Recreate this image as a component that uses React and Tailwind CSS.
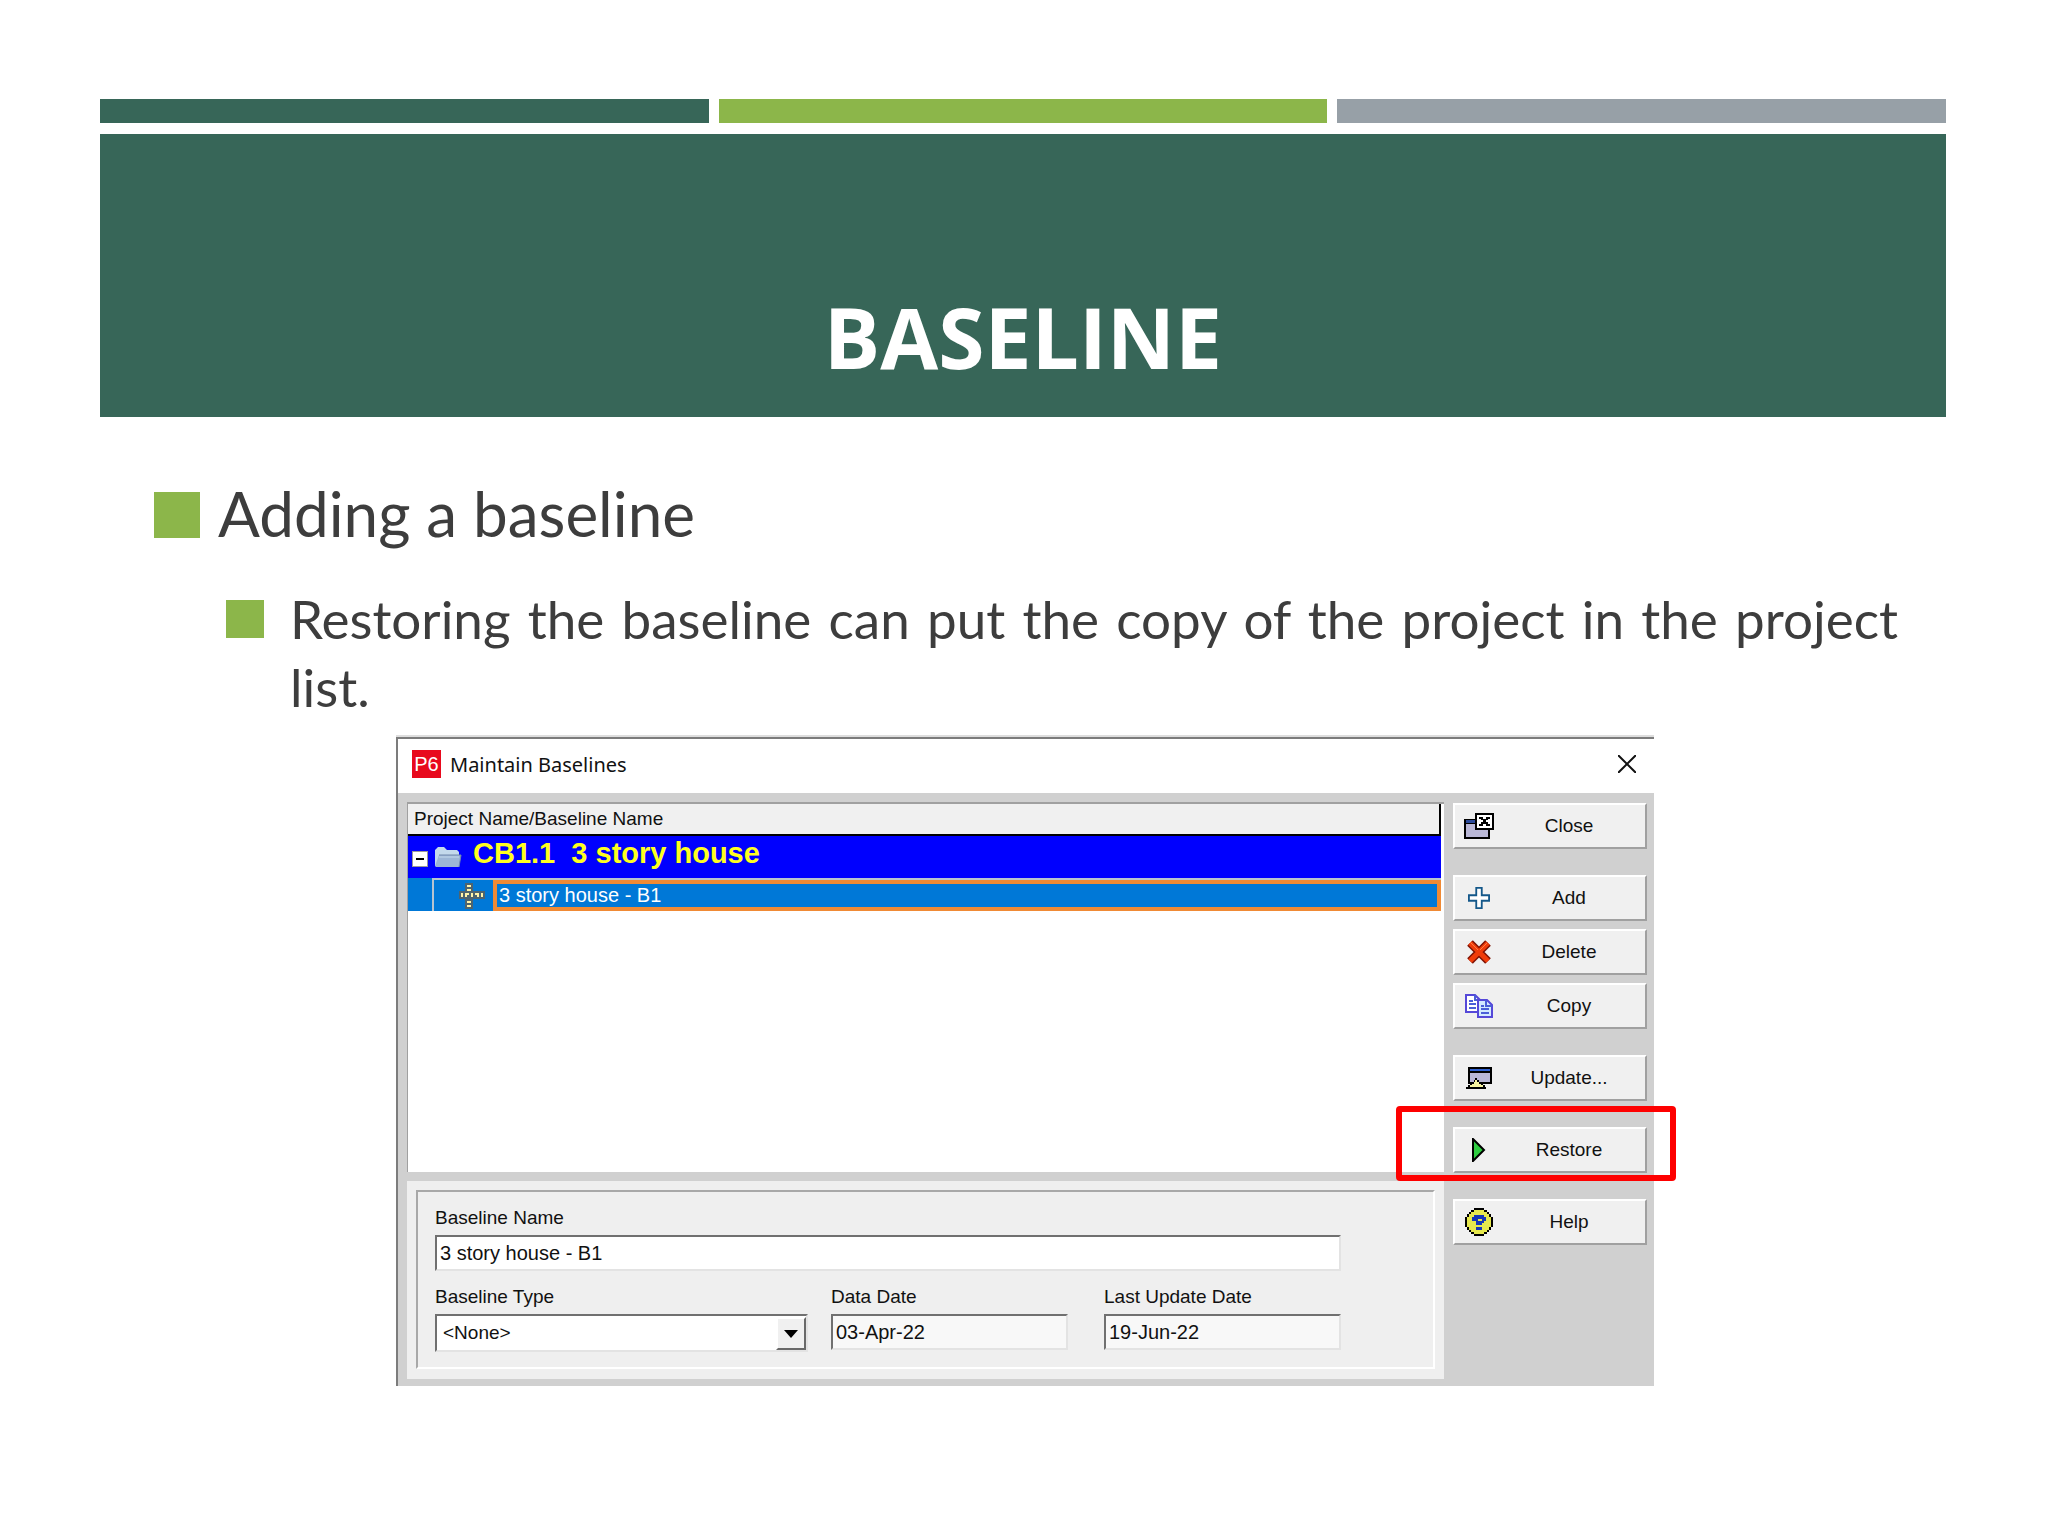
import React from "react";

const CloseIcon = () => (
  <svg viewBox="0 0 16 14" className="h-[26px] w-[30px]" shapeRendering="crispEdges">
    <path fill="#000" d="M0 3h14v11H0z" />
    <path fill="#b9b7d6" d="M1 6h12v7H1z" />
    <path fill="#2b4a9b" d="M1 4h6v1.500H1z" />
    <path fill="#000" d="M6 0h10v9H6z" />
    <path fill="#fff" d="M7 1h8v7H7z" />
    <path fill="#000" d="M8 2h2v1h2V2h2v1h-1v1h-1v1h1v1h1v1h-2V6h-2v1H8V6h1V5h1V4H9V3H8z" />
  </svg>
);

const AddIcon = () => (
  <svg viewBox="0 0 12 12" className="h-[22px] w-[22px]">
    <path d="M4.500 .5h3v4h4v3h-4v4h-3v-4h-4v-3h4z" fill="#fff" stroke="#14588a" />
  </svg>
);

const DeleteIcon = () => (
  <svg viewBox="0 0 24 24" className="h-6 w-6">
    <path d="M3 3l18 18M21 3L3 21" fill="none" stroke="#7d1205" strokeWidth="8" />
    <path d="M3 3l18 18M21 3L3 21" fill="none" stroke="#f03c0a" strokeWidth="5" />
    <path d="M3 2l8 8M20 3l-7 7" fill="none" stroke="#ff7a45" strokeWidth="1" />
  </svg>
);

const CopyIcon = () => (
  <svg viewBox="0 0 28 24" className="h-6 w-7">
    <path d="M1 1h9l5 5v12H1z" fill="#fff" stroke="#5548d8" strokeWidth="2" />
    <path d="M10 1v5h5M4 7h4M4 10h7M4 14h7" fill="none" stroke="#4a5fd8" strokeWidth="2" />
    <path d="M13 6h9l5 5v12H13z" fill="#d3eaff" stroke="#5548d8" strokeWidth="2" />
    <path d="M21 6v6h6M16 12h3M16 15h8M16 19h8" fill="none" stroke="#4a5fd8" strokeWidth="2" />
  </svg>
);

const UpdateIcon = () => (
  <svg viewBox="0 0 14 12" className="h-[22px] w-[26px]" shapeRendering="crispEdges">
    <path fill="#000" d="M1 0h13v9H1z" />
    <path fill="#2f5fd0" d="M2 1h11v1H2z" />
    <path fill="#b9b7d6" d="M2 3h11v5H2z" />
    <path fill="#000" d="M0 11h11v1H0zM1 10h9v1H1zM2 9h7v1H2zM3 8h5v1H3zM4 7h3v1H4zM5 6h1v1H5z" />
    <path fill="#f6f3a0" d="M5 7h1v1h1v1h1v1h1v1H2v-1h1V9h1V8h1z" />
  </svg>
);

const RestoreIcon = () => (
  <svg viewBox="0 0 14 24" className="h-6 w-[14px]">
    <path d="M1 1l11 11L1 23z" fill="#2ecc40" stroke="#000" strokeWidth="2" />
  </svg>
);

const HelpIcon = () => (
  <svg viewBox="0 0 15 15" className="h-7 w-7" shapeRendering="crispEdges">
    <path
      fill="#000"
      d="M5 0h5v1h2v1h1v1h1v2h1v5h-1v2h-1v1h-1v1h-2v1H5v-1H3v-1H2v-1H1v-2H0V5h1V3h1V2h1V1h2z"
    />
    <path
      fill="#e6e84e"
      d="M5 1h5v1h2v1h1v2h1v5h-1v2h-1v1h-2v1H5v-1H3v-1H2v-2H1V5h1V3h1V2h2z"
    />
    <path fill="#1436b8" d="M5 4h5v1h1v2h-1v1H9v1H6V7h3V6H7v1H4V5h1zM6 10h3v2H6z" />
  </svg>
);

const FolderIcon = () => (
  <svg viewBox="0 0 28 22" className="h-[22px] w-7">
    <path d="M1 20V4l3-3h6l3 3h10l2 2v14z" fill="#c3d9ec" />
    <path d="M1 20l4-11h22l-2 12H2z" fill="#9db6d6" />
    <path d="M5 9h22l-2 12" fill="none" stroke="#7088ac" />
    <path d="M5 11h20" stroke="#c3d9ec" />
  </svg>
);

const BaselineIcon = () => (
  <svg viewBox="0 0 13 13" className="h-[26px] w-[26px]" shapeRendering="crispEdges">
    <path
      d="M3 0h4v4h6v4H7v5H3V8H0V4h3z"
      fill="#4d6470"
    />
    <path
      d="M4 1h2v1H4zM4 3h2v1H4zM4 9h2v1H4zM4 11h2v1H4zM1 5h1v2H1zM3 5h2v1H4v1H3zM6 5h1v2H6zM8 5h2v2H9V6H8zM11 5h1v2h-1z"
      fill="#fff3a8"
    />
  </svg>
);

const sections = [
  [{ label: "Close", icon: <CloseIcon /> }],
  [
    { label: "Add", icon: <AddIcon /> },
    { label: "Delete", icon: <DeleteIcon /> },
    { label: "Copy", icon: <CopyIcon /> },
  ],
  [{ label: "Update...", icon: <UpdateIcon /> }],
  [{ label: "Restore", icon: <RestoreIcon />, highlight: true }],
  [{ label: "Help", icon: <HelpIcon /> }],
];

function SideButton({ label, icon, highlight }) {
  return (
    <div className="relative">
      <button
        type="button"
        className="flex h-[46px] w-full items-center border-2 border-t-white border-l-white border-r-[#a0a0a0] border-b-[#a0a0a0] bg-[#f0f0f0] pr-3 pl-1.5"
      >
        <span className="flex w-9 justify-center">{icon}</span>
        <span className="flex-1 pl-2 text-center">{label}</span>
      </button>
      {highlight && (
        <div className="pointer-events-none absolute -top-[21px] -right-[29px] -bottom-2 -left-[57px] z-10 rounded border-[6px] border-[#fe0000]" />
      )}
    </div>
  );
}

const sunken =
  "w-full border-2 border-t-[#707070] border-l-[#707070] border-r-[#e3e3e3] border-b-[#e3e3e3] outline-none";

function Field({ id, label, value, className, readOnly }) {
  return (
    <div className={className}>
      <label htmlFor={id} className="block leading-6">
        {label}
      </label>
      <input
        id={id}
        type="text"
        defaultValue={value}
        readOnly={readOnly}
        className={`${sunken} mt-[5px] block h-9 px-[3px] text-[20px] ${readOnly ? "bg-[#f8f8f8]" : "bg-white"}`}
      />
    </div>
  );
}

function Dialog() {
  return (
    <section className="mt-[14px] mr-[292px] ml-[296px] border-t-2 border-[#dedede] font-['Liberation_Sans',Arial,sans-serif] text-[19px] text-[#111]">
      <div className="border-t-2 border-l-2 border-[#7c7c7c]">
        {/* Title bar */}
        <header className="flex h-[54px] items-center bg-white pr-[18px] pb-1 pl-[14px]">
          <span className="flex h-7 w-[29px] items-center justify-center bg-[#e8091d] text-[20px] text-white">
            P6
          </span>
          <h2 className="ml-[9px] pt-[2px] font-['Noto_Sans','Open_Sans',sans-serif] text-[20px]">
            Maintain Baselines
          </h2>
          <button type="button" aria-label="Close window" className="ml-auto">
            <svg viewBox="0 0 18 18" className="h-[18px] w-[18px]">
              <path d="M0 0l18 18M18 0L0 18" stroke="#111" strokeWidth="2" />
            </svg>
          </button>
        </header>

        <div className="flex gap-[9px] bg-[#d0d0d0] pt-[9px] pr-[7px] pb-[7px] pl-[9px]">
          <div className="flex flex-1 flex-col gap-[9px]">
            {/* Baseline tree */}
            <div className="h-[370px] border-t-2 border-l border-[#a0a0a0] bg-white pr-[3px]">
              <table className="w-full border-separate border-spacing-0 text-left">
                <thead>
                  <tr>
                    <th
                      colSpan={3}
                      className="h-8 border-r-2 border-b-2 border-black bg-[#f0f0f0] px-1.5 py-0 font-normal leading-7"
                    >
                      Project Name/Baseline Name
                    </th>
                  </tr>
                </thead>
                <tbody>
                  <tr className="bg-[#0000fe]">
                    <td colSpan={3} className="p-0">
                      <div className="flex h-[42px] items-center pl-1">
                        <button
                          type="button"
                          aria-label="Collapse"
                          className="mt-[3px] flex h-4 w-4 items-center justify-center border border-[#9a9a9a] bg-white"
                        >
                          <span className="h-[2px] w-2 bg-black" />
                        </button>
                        <span className="ml-1.5">
                          <FolderIcon />
                        </span>
                        <span className="ml-[11px] pb-2 text-[29px] leading-8 font-bold whitespace-pre text-[#ffff1e]">
                          CB1.1  3 story house
                        </span>
                      </div>
                    </td>
                  </tr>
                  <tr className="bg-[#0078d7] text-white">
                    <td className="w-6 p-0" />
                    <td className="w-[61px] border-t-2 border-l-2 border-[#b8c4d0] p-0">
                      <div className="flex justify-center pl-4">
                        <BaselineIcon />
                      </div>
                    </td>
                    <td className="border-t-2 border-[#b8c4d0] p-0">
                      <div className="h-[31px] border-4 border-[#f08a35] px-[2px] text-[20px] leading-[22px]">
                        3 story house - B1
                      </div>
                    </td>
                  </tr>
                </tbody>
              </table>
            </div>

            {/* Details of the selected baseline */}
            <form className="bg-[#efefef] p-[9px] pb-[10px]">
              <div className="border-2 border-t-[#a8a8a8] border-l-[#a8a8a8] border-r-white border-b-white pt-[14px] pr-[92px] pb-[15px] pl-[17px]">
                <Field id="name" label="Baseline Name" value="3 story house - B1" />
                <div className="mt-[14px] flex">
                  <div className="flex-1">
                    <label htmlFor="type" className="block leading-6">
                      Baseline Type
                    </label>
                    <div className="relative mt-[5px]">
                      <select
                        id="type"
                        className={`${sunken} block h-[38px] appearance-none bg-white px-1.5`}
                      >
                        <option>&lt;None&gt;</option>
                      </select>
                      <span className="pointer-events-none absolute top-[3px] right-[2px] bottom-[2px] flex w-[30px] items-center justify-center border-2 border-t-white border-l-white border-r-[#696969] border-b-[#696969] bg-[#f0f0f0]">
                        <svg viewBox="0 0 14 8" className="h-2 w-[14px]">
                          <path d="M0 0h14L7 8z" fill="#000" />
                        </svg>
                      </span>
                    </div>
                  </div>
                  <Field
                    id="data-date"
                    label="Data Date"
                    value="03-Apr-22"
                    className="ml-[23px] w-[237px]"
                    readOnly
                  />
                  <Field
                    id="update-date"
                    label="Last Update Date"
                    value="19-Jun-22"
                    className="ml-9 w-[237px]"
                    readOnly
                  />
                </div>
              </div>
            </form>
          </div>

          <div className="flex w-[194px] flex-col gap-[26px] pt-px">
            {sections.map((buttons, i) => (
              <div key={i} className="flex flex-col gap-2">
                {buttons.map((b) => (
                  <SideButton key={b.label} {...b} />
                ))}
              </div>
            ))}
          </div>
        </div>
      </div>
    </section>
  );
}

export default function App() {
  return (
    <main className="min-h-screen bg-white pt-[99px] pr-[102px] pl-[100px] font-['Lato',sans-serif] text-[#3d3d3d]">
      <div className="grid h-6 grid-cols-3 gap-[10px]">
        <div className="bg-[#376658]" />
        <div className="bg-[#8cb64a]" />
        <div className="bg-[#97a0a7]" />
      </div>
      <div className="mt-[11px] flex h-[283px] items-end justify-center bg-[#376658] pb-9">
        <h1 className="font-['Open_Sans','Noto_Sans',sans-serif] text-[84px] leading-[88px] font-bold text-white">
          BASELINE
        </h1>
      </div>

      <ul className="mt-16 pr-12 pl-[54px]">
        <li>
          <div className="flex items-center">
            <span className="mt-1 h-[46px] w-[46px] bg-[#8cb64a]" />
            <span className="ml-[18px] text-[62px] leading-[64px]">Adding a baseline</span>
          </div>
          <ul className="mt-10 pl-[72px]">
            <li className="flex">
              <span className="mt-[15px] h-[38px] w-[38px] shrink-0 bg-[#8cb64a]" />
              <p className="ml-[26px] flex-1 text-justify text-[53px] leading-[68px]">
                Restoring the baseline can put the copy of the project in the project list.
              </p>
            </li>
          </ul>
        </li>
      </ul>

      <Dialog />
    </main>
  );
}
